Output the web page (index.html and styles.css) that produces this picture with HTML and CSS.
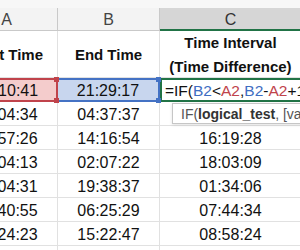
FILE: index.html
```html
<!DOCTYPE html>
<html lang="en">
<head>
    <meta charset="UTF-8">
    <meta name="viewport" content="width=device-width, initial-scale=1.0">
    <title>Time Interval</title>
    <link rel="stylesheet" href="styles.css">
</head>
<body>
    <div class="top-strip"></div>
    <div class="sheet">
        <div class="col-head">A</div>
        <div class="col-head">B</div>
        <div class="col-head active">C</div>

        <div class="cell title">Start Time</div>
        <div class="cell title">End Time</div>
        <div class="cell title">Time Interval<br>(Time Difference)</div>

        <div class="cell ref-a">05:10:41</div>
        <div class="cell ref-b">21:29:17</div>
        <div class="cell editing">=IF(<span class="blue">B2</span>&lt;<span class="red">A2</span>,<span class="blue">B2</span>-<span class="red">A2</span>+1,B2-A2)</div>

        <div class="cell">12:04:34</div>
        <div class="cell">04:37:37</div>
        <div class="cell"></div>

        <div class="cell">21:57:26</div>
        <div class="cell">14:16:54</div>
        <div class="cell">16:19:28</div>

        <div class="cell">08:04:13</div>
        <div class="cell">02:07:22</div>
        <div class="cell">18:03:09</div>

        <div class="cell">18:04:31</div>
        <div class="cell">19:38:37</div>
        <div class="cell">01:34:06</div>

        <div class="cell">22:40:55</div>
        <div class="cell">06:25:29</div>
        <div class="cell">07:44:34</div>

        <div class="cell">06:24:23</div>
        <div class="cell">15:22:47</div>
        <div class="cell">08:58:24</div>

        <div class="cell"></div>
        <div class="cell"></div>
        <div class="cell"></div>
    </div>

    <!-- function hint shown while typing the formula -->
    <div class="tooltip">IF(<b>logical_test</b>, [value_if_true], [value_if_false])</div>
</body>
</html>
```

FILE: styles.css
```css
html, body {
    margin: 0;
    padding: 0;
}

body {
    width: 300px;
    height: 250px;
    overflow: hidden;
    position: relative;
    background: #fff;
    font-family: "Liberation Sans", Arial, sans-serif;
    color: #111;
}

.top-strip {
    height: 8px;
    background: #f7f7f7;
}

.sheet {
    display: grid;
    grid-template-columns: 102px 102px 142px;
    grid-template-rows: 23px 47px;
    grid-auto-rows: 24px;
    margin-left: -44px;
}

.col-head {
    box-sizing: border-box;
    display: flex;
    align-items: center;
    justify-content: center;
    padding-top: 2px;
    background: #f3f3f3;
    border-right: 1px solid #c9c9c9;
    border-bottom: 1px solid #c9c9c9;
    font-size: 16px;
    color: #444;
}

.col-head.active {
    background: #d6d6d6;
    border-bottom: 2px solid #217346;
    color: #333;
}

.cell {
    box-sizing: border-box;
    position: relative;
    display: flex;
    align-items: center;
    justify-content: center;
    padding-top: 2px;
    border-right: 1px solid #e1e1e1;
    border-bottom: 1px solid #e1e1e1;
    font-size: 16px;
    white-space: nowrap;
}

.title {
    font-weight: bold;
    font-size: 15px;
    line-height: 24px;
    text-align: center;
    color: #111;
}

/* referenced cells while the formula is being typed */
.ref-a {
    background: #f4cccc;
    border: 2px solid #c0434b;
}

.ref-b {
    background: #c8d6ee;
    border: 2px solid #4472c4;
    border-left: 0;
}

.ref-a::before,
.ref-a::after,
.ref-b::before,
.ref-b::after {
    content: "";
    position: absolute;
    right: -3px;
    width: 5px;
    height: 5px;
    z-index: 2;
}

.ref-a::before,
.ref-b::before {
    top: -3px;
}

.ref-a::after,
.ref-b::after {
    bottom: -3px;
}

.ref-a::before,
.ref-a::after {
    background: #c0434b;
}

.ref-b::before,
.ref-b::after {
    background: #4472c4;
}

.editing {
    justify-content: flex-start;
    padding-left: 3px;
    border: 2px solid #217346;
    overflow: hidden;
    font-size: 15.5px;
    color: #111;
}

.blue {
    color: #3e6dc2;
}

.red {
    color: #c0434b;
}

.tooltip {
    position: absolute;
    left: 172px;
    top: 103px;
    height: 21px;
    box-sizing: border-box;
    padding: 1px 8px 0;
    background: #fff;
    border: 1px solid #c6c6c6;
    box-shadow: 0 1px 3px rgba(0, 0, 0, 0.12);
    font-size: 14px;
    line-height: 18px;
    color: #555;
    white-space: nowrap;
}

.tooltip b {
    color: #333;
}
```
